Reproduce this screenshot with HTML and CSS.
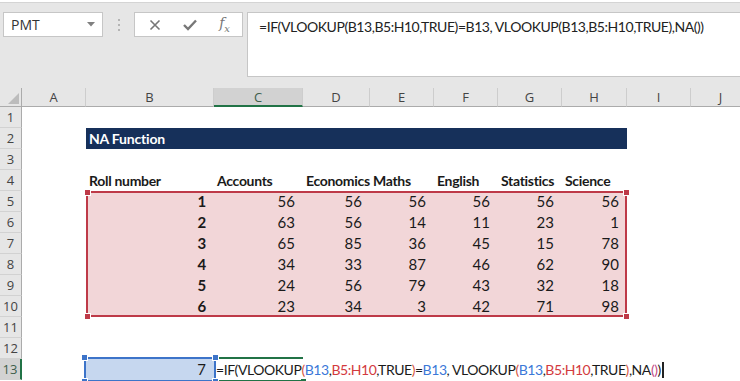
FILE: index.html
```html
<!DOCTYPE html>
<html lang="en">
<head>
    <meta charset="UTF-8">
    <title>NA Function</title>
    <link rel="stylesheet" href="styles.css">
</head>
<body>
    <!-- Barra de formula -->
    <div class="toolbar">
        <div class="namebox">
            <span>PMT</span>
            <svg width="8" height="5" viewBox="0 0 8 5"><polygon points="0,0 8,0 4,4.5" fill="#808080"/></svg>
        </div>
        <div class="grip"><i></i><i></i><i></i></div>
        <div class="fbtns">
            <svg width="12" height="12" viewBox="0 0 12 12"><path d="M1.5 1.5 L10.5 10.5 M10.5 1.5 L1.5 10.5" stroke="#777" stroke-width="1.6"/></svg>
            <svg width="14" height="12" viewBox="0 0 14 12"><path d="M1 6 L5 10 L13 1.5" stroke="#777" stroke-width="2.4" fill="none"/></svg>
            <span class="fx"><i>f</i><sub>x</sub></span>
        </div>
        <div class="finput">=IF(VLOOKUP(B13,B5:H10,TRUE)=B13, VLOOKUP(B13,B5:H10,TRUE),NA())</div>
    </div>

    <!-- Planilha -->
    <div class="sheet">
        <div class="corner"><svg width="22" height="19" viewBox="0 0 22 19"><polygon points="19,5 19,16 8,16" fill="#bcbcbc"/></svg></div>
        <div class="ch">A</div><div class="ch">B</div><div class="ch on">C</div><div class="ch">D</div><div class="ch">E</div>
        <div class="ch">F</div><div class="ch">G</div><div class="ch">H</div><div class="ch">I</div><div class="ch">J</div>

        <div class="rh">1</div>
        <div></div><div></div><div></div><div></div><div></div><div></div><div></div><div></div><div></div><div></div>

        <div class="rh">2</div>
        <div></div><div class="banner">NA Function</div><div></div><div></div>

        <div class="rh">3</div>
        <div></div><div></div><div></div><div></div><div></div><div></div><div></div><div></div><div></div><div></div>

        <div class="rh">4</div>
        <div></div>
        <div class="cell b">Roll number</div><div class="cell b">Accounts</div><div class="cell b">Economics</div>
        <div class="cell b">Maths</div><div class="cell b">English</div><div class="cell b">Statistics</div><div class="cell b">Science</div>
        <div></div><div></div>

        <div class="rh">5</div>
        <div></div>
        <div class="cell num b rng rt rl"><i class="hd tl"></i>1</div><div class="cell num rng rt">56</div><div class="cell num rng rt">56</div>
        <div class="cell num rng rt">56</div><div class="cell num rng rt">56</div><div class="cell num rng rt">56</div>
        <div class="cell num rng rt rr"><i class="hd tr"></i>56</div>
        <div></div><div></div>

        <div class="rh">6</div>
        <div></div>
        <div class="cell num b rng rl">2</div><div class="cell num rng">63</div><div class="cell num rng">56</div>
        <div class="cell num rng">14</div><div class="cell num rng">11</div><div class="cell num rng">23</div>
        <div class="cell num rng rr">1</div>
        <div></div><div></div>

        <div class="rh">7</div>
        <div></div>
        <div class="cell num b rng rl">3</div><div class="cell num rng">65</div><div class="cell num rng">85</div>
        <div class="cell num rng">36</div><div class="cell num rng">45</div><div class="cell num rng">15</div>
        <div class="cell num rng rr">78</div>
        <div></div><div></div>

        <div class="rh">8</div>
        <div></div>
        <div class="cell num b rng rl">4</div><div class="cell num rng">34</div><div class="cell num rng">33</div>
        <div class="cell num rng">87</div><div class="cell num rng">46</div><div class="cell num rng">62</div>
        <div class="cell num rng rr">90</div>
        <div></div><div></div>

        <div class="rh">9</div>
        <div></div>
        <div class="cell num b rng rl">5</div><div class="cell num rng">24</div><div class="cell num rng">56</div>
        <div class="cell num rng">79</div><div class="cell num rng">43</div><div class="cell num rng">32</div>
        <div class="cell num rng rr">18</div>
        <div></div><div></div>

        <div class="rh">10</div>
        <div></div>
        <div class="cell num b rng rb rl"><i class="hd bl"></i>6</div><div class="cell num rng rb">23</div><div class="cell num rng rb">34</div>
        <div class="cell num rng rb">3</div><div class="cell num rng rb">42</div><div class="cell num rng rb">71</div>
        <div class="cell num rng rb rr"><i class="hd br"></i>98</div>
        <div></div><div></div>

        <div class="rh">11</div>
        <div></div><div></div><div></div><div></div><div></div><div></div><div></div><div></div><div></div><div></div>

        <div class="rh">12</div>
        <div></div><div></div><div></div><div></div><div></div><div></div><div></div><div></div><div></div><div></div>

        <div class="rh on">13</div>
        <div></div>
        <div class="cell num sel"><i class="bh tl"></i><i class="bh tr"></i><i class="bh bl"></i><i class="bh br"></i>7</div>
        <div class="cell edit"><i class="gh"></i>=IF(VLOOKUP<span class="p1">(</span><span class="r1">B13</span>,<span class="r2">B5:H10</span>,TRUE<span class="p1">)</span>=<span class="r1">B13</span>, VLOOKUP<span class="p1">(</span><span class="r1">B13</span>,<span class="r2">B5:H10</span>,TRUE<span class="p1">)</span>,NA<span class="p2">()</span>)<span class="caret"></span></div>
        <div></div><div></div><div></div><div></div><div></div><div></div><div></div>
    </div>
</body>
</html>
```

FILE: styles.css
```css
/* Estilos da planilha */
body {
    margin: 0;
    width: 740px;
    height: 381px;
    overflow: hidden;
    background-color: #fff;
    font-family: Lato, "Liberation Sans", sans-serif;
}

/* Barra de formula */
.toolbar {
    height: 86px;
    box-sizing: border-box;
    background-color: #e6e6e6;
    border-top: 1px solid #d4d4d4;
    margin-top: 2px;
    padding: 9px 0 0 3px;
    display: flex;
    align-items: flex-start;
}
.namebox {
    flex-shrink: 0;
    width: 100px;
    height: 25px;
    box-sizing: border-box;
    background-color: #fff;
    border: 1px solid #c6c6c6;
    display: flex;
    align-items: center;
    justify-content: space-between;
    padding: 0 7px 0 7px;
    font-family: "Open Sans", sans-serif;
    font-size: 14px;
    color: #333;
}
.grip {
    flex-shrink: 0;
    width: 31px;
    height: 25px;
    display: flex;
    flex-direction: column;
    align-items: center;
    justify-content: center;
    gap: 3px;
}
.grip i {
    width: 2px;
    height: 2px;
    background-color: #b4b4b4;
}
.fbtns {
    flex-shrink: 0;
    width: 109px;
    height: 25px;
    box-sizing: border-box;
    background-color: #fff;
    border: 1px solid #c6c6c6;
    display: flex;
    align-items: center;
    justify-content: space-between;
    padding: 0 12px 0 14px;
}
.fx {
    font-family: "DejaVu Serif", serif;
    font-style: italic;
    font-size: 14px;
    color: #777;
}
.fx sub {
    font-size: 10px;
}
.finput {
    flex: 1;
    min-width: 0;
    margin-left: 4px;
    height: 65px;
    box-sizing: border-box;
    background-color: #fff;
    border: 1px solid #c6c6c6;
    border-right: none;
    padding: 5px 0 0 11px;
    font-size: 14px;
    letter-spacing: -0.45px;
    color: #222;
    white-space: nowrap;
}

/* Grade */
.sheet {
    display: grid;
    grid-template-columns: 22px 64px 128px 89px 67px 64px 64px 64px 65px 64px 60px;
    grid-template-rows: 19px repeat(13, 21px);
    font-size: 15px;
    color: #1a1a1a;
}
.corner {
    background-color: #e6e6e6;
    border-right: 1px solid #ababab;
    border-bottom: 1px solid #ababab;
    box-sizing: border-box;
}
.corner svg {
    display: block;
}
.ch, .rh {
    background-color: #e6e6e6;
    box-sizing: border-box;
    text-align: center;
    font-family: "Open Sans", sans-serif;
    font-size: 13px;
    color: #444;
}
.ch {
    border-right: 1px solid #cdcdcd;
    border-bottom: 1px solid #ababab;
    line-height: 18px;
}
.rh {
    border-right: 1px solid #ababab;
    border-bottom: 1px solid #d2d2d2;
    line-height: 21px;
}
.ch.on {
    background-color: #d2d2d2;
    border-bottom: 2px solid #217346;
    color: #3e5e4c;
}
.rh.on {
    background-color: #d2d2d2;
    border-right: 2px solid #217346;
    color: #3e5e4c;
}
.banner {
    grid-column: span 7;
    background-color: #16305a;
    color: #fff;
    font-weight: bold;
    font-size: 14px;
    letter-spacing: -0.2px;
    line-height: 21px;
    padding-left: 3px;
}
.cell {
    position: relative;
    box-sizing: border-box;
    white-space: nowrap;
    line-height: 21px;
    padding: 0 3px;
}
.b {
    font-weight: bold;
    font-size: 14px;
    letter-spacing: -0.3px;
}
.num {
    text-align: right;
    padding-right: 8px;
}
.num.b {
    font-size: 15px;
}

/* Intervalo B5:H10 */
.rng {
    background-color: #f2d6d8;
}
.rt { box-shadow: inset 0 2px 0 #be3a48; }
.rb { box-shadow: inset 0 -2px 0 #be3a48; }
.rl { box-shadow: inset 2px 0 0 #be3a48; }
.rr { box-shadow: inset -2px 0 0 #be3a48; }
.rt.rl { box-shadow: inset 0 2px 0 #be3a48, inset 2px 0 0 #be3a48; }
.rt.rr { box-shadow: inset 0 2px 0 #be3a48, inset -2px 0 0 #be3a48; }
.rb.rl { box-shadow: inset 0 -2px 0 #be3a48, inset 2px 0 0 #be3a48; }
.rb.rr { box-shadow: inset 0 -2px 0 #be3a48, inset -2px 0 0 #be3a48; }
.hd, .bh {
    position: absolute;
    width: 5px;
    height: 5px;
    border: 1px solid #fff;
    z-index: 2;
}
.hd { background-color: #be3a48; }
.hd.tl { left: -2px; top: -2px; }
.hd.tr { right: -3px; top: -2px; }
.hd.bl { left: -2px; bottom: -3px; }
.hd.br { right: -3px; bottom: -3px; }

/* Celula selecionada */
.sel {
    background-color: #c6d7ef;
    box-shadow: 0 0 0 2px #3d74c9;
    z-index: 1;
}
.bh { background-color: #3d74c9; }
.bh.tl { left: -5px; top: -5px; }
.bh.tr { right: -5px; top: -5px; }
.bh.bl { left: -5px; bottom: -5px; }
.bh.br { right: -5px; bottom: -5px; }

/* Celula em edicao */
.edit {
    padding-left: 2px;
    font-size: 14px;
    letter-spacing: -0.45px;
    box-shadow: 0 -2px 0 #217346, 0 2px 0 #217346, inset 2px 0 0 #217346;
}
.gh {
    position: absolute;
    right: -3px;
    bottom: -4px;
    width: 5px;
    height: 5px;
    background-color: #217346;
}
.r1 { color: #3b78d8; }
.r2 { color: #d33a3e; }
.p1 { color: #d8553d; }
.p2 { color: #c24a86; }
.caret {
    display: inline-block;
    width: 2px;
    height: 16px;
    margin-left: 1px;
    background-color: #222;
    vertical-align: -3px;
}
```
